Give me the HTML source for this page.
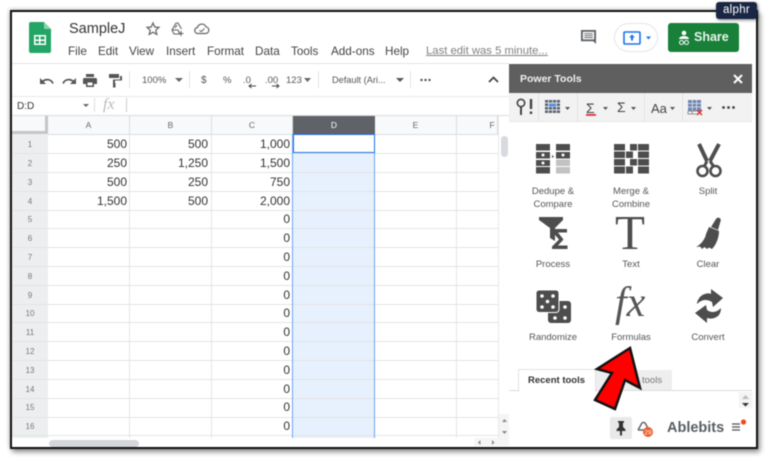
<!DOCTYPE html>
<html><head><meta charset="utf-8">
<style>
html,body{margin:0;padding:0;background:#fff;}
body{width:768px;height:459px;position:relative;overflow:hidden;font-family:"Liberation Sans",sans-serif;color:#3c4043;}
#w{position:absolute;left:0;top:0;width:768px;height:459px;filter:blur(.4px);overflow:hidden;}
.a{position:absolute;}
.t{position:absolute;white-space:nowrap;}
#frame{left:10px;top:10px;width:744px;height:435px;border:2px solid #111;box-shadow:2px 3px 5px rgba(0,0,0,.45),-1px -1px 4px rgba(0,0,0,.2);background:#fff;}
.m{top:45px;font-size:11.700px;color:#444;}
.hc{position:absolute;top:116px;height:18px;background:#f8f9fa;border-right:1px solid #dadce0;box-sizing:border-box;text-align:center;font-size:8.500px;line-height:18px;color:#666;}
.rn{position:absolute;left:12px;width:36px;margin-top:1px;background:#eceef0;font-size:8px;text-align:center;color:#777;box-sizing:border-box;line-height:18px;}
.hl{position:absolute;left:12px;width:486px;height:1px;background:#e3e3e3;}
.vl{position:absolute;top:134px;width:1px;height:304px;background:#e6e6e6;}
.c{position:absolute;font-size:12px;color:#333;text-align:right;width:76px;line-height:18px;}
.pl{position:absolute;margin-top:1px;font-size:9.500px;color:#555;text-align:center;width:80px;line-height:12.500px;}
.tb{position:absolute;margin-top:1px;font-size:9.500px;color:#555;}
</style></head>
<body>
<div id="w">
<div class="a" id="frame"></div>

<!-- sheets logo -->
<svg class="a" style="left:29px;top:22px" width="23" height="31" viewBox="0 0 23 31">
<path d="M2 0H15L22 7V29a2 2 0 0 1-2 2H2a2 2 0 0 1-2-2V2a2 2 0 0 1 2-2z" fill="#23a566"/>
<path d="M15 0L22 7H16a1 1 0 0 1-1-1z" fill="#8ed1b1"/>
<path d="M5 13h12v10H5z M6.500 14.500v3h3.500v-3z M11.500 14.500v3h4v-3z M6.500 19v2.500h3.500V19z M11.500 19v2.500h4V19z" fill="#fff" fill-rule="evenodd"/>
</svg>

<div class="t" style="left:69px;top:21px;font-size:14.500px;color:#333;">SampleJ</div>
<svg class="a" style="left:145px;top:21px" width="16" height="16" viewBox="0 0 16 16"><path d="M8 2l1.800 4 4.200.4-3.200 2.800 1 4.200L8 11.200 4.200 13.400l1-4.200L2 6.400 6.200 6z" fill="none" stroke="#5f6368" stroke-width="1.200"/></svg>
<svg class="a" style="left:169px;top:21px" width="17" height="16" viewBox="0 0 17 16"><path d="M7 2L3 9l2 4h6M7 2h2l3.500 6M3 9h6l2 4M6 7l2-3" fill="none" stroke="#5f6368" stroke-width="1.100"/><path d="M12 10v5M9.500 12.500h5" stroke="#5f6368" stroke-width="1.100"/></svg>
<svg class="a" style="left:194px;top:22px" width="16" height="14" viewBox="0 0 16 14"><path d="M4 11.500a3 3 0 0 1-.5-6A4.500 4.500 0 0 1 12 4.800a3.400 3.400 0 0 1 0 6.700z" fill="none" stroke="#5f6368" stroke-width="1.200"/><path d="M5.500 8.500l2 1 3-3" fill="none" stroke="#5f6368" stroke-width="1"/></svg>

<div class="t m" style="left:68px">File</div>
<div class="t m" style="left:98px">Edit</div>
<div class="t m" style="left:129px">View</div>
<div class="t m" style="left:166px">Insert</div>
<div class="t m" style="left:207px">Format</div>
<div class="t m" style="left:255px">Data</div>
<div class="t m" style="left:291px">Tools</div>
<div class="t m" style="left:331px">Add-ons</div>
<div class="t m" style="left:385px">Help</div>
<div class="t" style="left:426px;top:45px;font-size:11.300px;color:#808080;text-decoration:underline;">Last edit was 5 minute...</div>

<!-- comment -->
<svg class="a" style="left:580px;top:29px" width="17" height="16" viewBox="0 0 18 17"><path d="M1 1h16v15l-3-3H1z" fill="#5f6368"/><path d="M3 3h12v8H3z" fill="#fff"/><path d="M4.500 4.500h9v1h-9zM4.500 6.500h9v1h-9zM4.500 8.500h9v1h-9z" fill="#5f6368"/></svg>
<!-- present -->
<div class="a" style="left:614px;top:23px;width:44px;height:29px;border:1px solid #e3e6ea;border-radius:15px;box-sizing:border-box;"></div>
<svg class="a" style="left:623px;top:31px" width="32" height="14" viewBox="0 0 32 14"><rect x="1" y="1" width="16" height="12" rx="1" fill="#fff" stroke="#1a73e8" stroke-width="1.600"/><path d="M9 3.500l3 3h-2v3h-2v-3h-2z" fill="#1a73e8"/><path d="M23 5.500h5l-2.500 3z" fill="#1a73e8"/></svg>
<!-- share -->
<div class="a" style="left:668px;top:23px;width:71px;height:29px;background:#188038;border-radius:3px;"></div>
<svg class="a" style="left:677px;top:30px" width="14" height="16" viewBox="0 0 14 16"><circle cx="7" cy="3" r="2.300" fill="#fff"/><path d="M2 9c0-2 3-3 5-3s5 1 5 3z" fill="#fff"/><circle cx="4.500" cy="12.500" r="2" fill="none" stroke="#fff"/><circle cx="9.500" cy="12.500" r="2" fill="none" stroke="#fff"/></svg>
<div class="t" style="left:694px;top:30px;font-size:12.500px;font-weight:bold;color:#e9f5ec;">Share</div>

<!-- alphr -->
<div class="a" style="left:716px;top:2px;width:41px;height:17px;background:#1a2744;border-radius:3px;box-shadow:1px 1px 3px rgba(0,0,0,.5);color:#fff;font-size:11.500px;text-align:center;line-height:16px;letter-spacing:.3px;">alphr</div>

<!-- dividers -->
<div class="a" style="left:12px;top:63px;width:497px;height:1px;background:#e3e3e3;"></div>
<div class="a" style="left:12px;top:96px;width:497px;height:1px;background:#e8e8e8;"></div>
<div class="a" style="left:12px;top:115px;width:497px;height:1px;background:#dadce0;"></div>

<!-- toolbar -->
<svg class="a" style="left:39px;top:73px" width="90" height="15" viewBox="0 0 90 15">
<path d="M14 10.500C12 6 7 5.500 3.500 8.500" fill="none" stroke="#555" stroke-width="1.700"/><path d="M1 5v6h6z" fill="#555"/>
<path d="M24 10.500C26 6 31 5.500 34.500 8.500" fill="none" stroke="#555" stroke-width="1.700"/><path d="M37 5v6h-6z" fill="#555"/>
<path d="M47 1h8v3h-8zM45 5h12a1.500 1.500 0 0 1 1 1.500V11h-3v3h-8v-3h-3V6.500A1.500 1.500 0 0 1 45 5z" fill="#555"/><path d="M48.500 9.500h5v3h-5z" fill="#fff"/>
<path d="M70 1h10v4H70zM81 3h2v4.500h-7V10h-2V6.500h7zM74 10h2.500v4.500H74z" fill="#555"/>
</svg>
<div class="a" style="left:129px;top:71px;width:1px;height:17px;background:#e3e3e3"></div>
<div class="tb" style="left:142px;top:74px;">100%</div>
<svg class="a" style="left:175px;top:78px" width="8" height="5"><path d="M0 0h8L4 4z" fill="#666"/></svg>
<div class="a" style="left:189px;top:71px;width:1px;height:17px;background:#e3e3e3"></div>
<div class="tb" style="left:201px;top:74px;font-size:10px;">$</div>
<div class="tb" style="left:223px;top:74px;">%</div>
<div class="tb" style="left:243px;top:74px;">.0</div>
<svg class="a" style="left:247px;top:83px" width="10" height="6"><path d="M9 3H3M4.500 1L2 3l2.500 2" fill="none" stroke="#444"/></svg>
<div class="tb" style="left:265px;top:74px;">.00</div>
<svg class="a" style="left:271px;top:83px" width="10" height="6"><path d="M1 3h6M5.500 1L8 3 5.500 5" fill="none" stroke="#444"/></svg>
<div class="tb" style="left:286px;top:74px;">123</div>
<svg class="a" style="left:304px;top:78px" width="7" height="4"><path d="M0 0h7L3.500 4z" fill="#666"/></svg>
<div class="a" style="left:318px;top:71px;width:1px;height:17px;background:#e3e3e3"></div>
<div class="tb" style="left:332px;top:74px;font-size:9.200px;">Default (Ari...</div>
<svg class="a" style="left:396px;top:78px" width="8" height="5"><path d="M0 0h8L4 4z" fill="#555"/></svg>
<div class="a" style="left:410px;top:71px;width:1px;height:17px;background:#e3e3e3"></div>
<svg class="a" style="left:420px;top:78px" width="12" height="4"><circle cx="1.500" cy="2" r="1.200" fill="#555"/><circle cx="5.500" cy="2" r="1.200" fill="#555"/><circle cx="9.500" cy="2" r="1.200" fill="#555"/></svg>
<svg class="a" style="left:488px;top:76px" width="11" height="8"><path d="M1 6l4.500-4.500L10 6" fill="none" stroke="#444" stroke-width="1.800"/></svg>

<!-- formula bar -->
<div class="t" style="left:17px;top:101px;font-size:10px;color:#333;">D:D</div>
<svg class="a" style="left:83px;top:104px" width="6" height="4"><path d="M0 0h6L3 3z" fill="#666"/></svg>
<div class="a" style="left:94px;top:98px;width:1px;height:14px;background:#ddd"></div>
<div class="t" style="left:103px;top:96px;font-family:'Liberation Serif',serif;font-style:italic;font-size:16px;color:#bbb;">fx</div>
<div class="a" style="left:126px;top:98px;width:1px;height:14px;background:#ccc"></div>

<!-- grid headers -->
<div class="a" style="left:12px;top:116px;width:36px;height:18px;background:#f8f9fa;border-right:3px solid #c4c6c8;border-bottom:3px solid #c4c6c8;box-sizing:border-box;"></div>
<div class="hc" style="left:48px;width:82px;">A</div>
<div class="hc" style="left:130px;width:82px;">B</div>
<div class="hc" style="left:212px;width:81px;">C</div>
<div class="hc" style="left:293px;width:82px;background:#5f6368;color:#fff;border:0;">D</div>
<div class="hc" style="left:375px;width:82px;">E</div>
<div class="hc" style="left:457px;width:41px;text-align:right;padding-right:0;">F&nbsp;</div>
<div class="a" style="left:12px;top:134px;width:486px;height:1px;background:#dadce0;"></div>

<!-- column D highlight -->
<div class="a" style="left:293px;top:134px;width:82px;height:304px;background:#e7f0fd;"></div>

<!-- verticals -->
<div class="vl" style="left:129px"></div><div class="vl" style="left:211px"></div><div class="vl" style="left:456px"></div>

<!-- row headers -->
<div class="a" style="left:12px;top:134px;width:36px;height:304px;background:#eceef0;"></div>
<div class="rn" style="top:135px;">1</div><div class="rn" style="top:154px;">2</div><div class="rn" style="top:172.500px;">3</div><div class="rn" style="top:191.500px;">4</div>
<div class="rn" style="top:210px;">5</div><div class="rn" style="top:229px;">6</div><div class="rn" style="top:248px;">7</div><div class="rn" style="top:266.500px;">8</div>
<div class="rn" style="top:285.500px;">9</div><div class="rn" style="top:304px;">10</div><div class="rn" style="top:323px;">11</div><div class="rn" style="top:342px;">12</div>
<div class="rn" style="top:360.500px;">13</div><div class="rn" style="top:379.500px;">14</div><div class="rn" style="top:398px;">15</div><div class="rn" style="top:417px;">16</div>

<!-- horizontals -->
<div class="hl" style="top:153px"></div><div class="hl" style="top:172px"></div><div class="hl" style="top:191px"></div><div class="hl" style="top:210px"></div>
<div class="hl" style="top:228px"></div><div class="hl" style="top:247px"></div><div class="hl" style="top:266px"></div><div class="hl" style="top:285px"></div>
<div class="hl" style="top:304px"></div><div class="hl" style="top:322px"></div><div class="hl" style="top:341px"></div><div class="hl" style="top:360px"></div>
<div class="hl" style="top:379px"></div><div class="hl" style="top:398px"></div><div class="hl" style="top:417px"></div><div class="hl" style="top:435px"></div>

<!-- D selection -->
<div class="a" style="left:292px;top:134px;width:1px;height:304px;background:#6fa5f0;"></div>
<div class="a" style="left:374px;top:134px;width:1px;height:304px;background:#6fa5f0;"></div>
<div class="a" style="left:293px;top:134px;width:82px;height:19px;border:1px solid #1a73e8;box-sizing:border-box;background:#fff;"></div>

<!-- cells -->
<div class="c" style="left:51px;top:135px">500</div><div class="c" style="left:132px;top:135px">500</div><div class="c" style="left:214px;top:135px">1,000</div>
<div class="c" style="left:51px;top:154px">250</div><div class="c" style="left:132px;top:154px">1,250</div><div class="c" style="left:214px;top:154px">1,500</div>
<div class="c" style="left:51px;top:172.500px">500</div><div class="c" style="left:132px;top:172.500px">250</div><div class="c" style="left:214px;top:172.500px">750</div>
<div class="c" style="left:51px;top:191.500px">1,500</div><div class="c" style="left:132px;top:191.500px">500</div><div class="c" style="left:214px;top:191.500px">2,000</div>
<div class="c" style="left:214px;top:210px">0</div><div class="c" style="left:214px;top:229px">0</div><div class="c" style="left:214px;top:248px">0</div>
<div class="c" style="left:214px;top:266.500px">0</div><div class="c" style="left:214px;top:285.500px">0</div><div class="c" style="left:214px;top:304px">0</div>
<div class="c" style="left:214px;top:323px">0</div><div class="c" style="left:214px;top:342px">0</div><div class="c" style="left:214px;top:360.500px">0</div>
<div class="c" style="left:214px;top:379.500px">0</div><div class="c" style="left:214px;top:398px">0</div><div class="c" style="left:214px;top:417px">0</div>

<!-- scrollbars -->
<div class="a" style="left:498px;top:116px;width:11px;height:330px;background:#fff;border-left:1px solid #e8e8e8;box-sizing:border-box;"></div>
<div class="a" style="left:501px;top:136px;width:7px;height:21px;background:#d8dadf;border-radius:4px;"></div>
<div class="a" style="left:499px;top:414px;width:10px;height:32px;background:#f5f5f5;"></div>
<svg class="a" style="left:501px;top:418px" width="7" height="18"><path d="M1 4h5L3.500 1zM1 13h5l-2.500 3z" fill="#888"/></svg>
<div class="a" style="left:12px;top:438px;width:486px;height:8px;background:#fff;"></div>
<div class="a" style="left:49px;top:440px;width:90px;height:7px;background:#d5d7db;border-radius:4px;"></div>
<div class="a" style="left:474px;top:438px;width:35px;height:8px;background:#f5f5f5;"></div>
<svg class="a" style="left:477px;top:439px" width="20" height="7"><path d="M3.500 1v5L1 3.500zM15 1v5l2.500-2.500z" fill="#888"/></svg>

<!-- side panel -->
<div class="a" style="left:509px;top:64px;width:243px;height:382px;background:#fff;"></div>
<div class="a" style="left:509px;top:64px;width:243px;height:29px;background:#5f5f5f;"></div>
<div class="t" style="left:520px;top:73px;font-size:10.500px;font-weight:bold;color:#f0f0f0;">Power Tools</div>
<svg class="a" style="left:733px;top:74px" width="10" height="10"><path d="M1 1l8 8M9 1l-8 8" stroke="#fff" stroke-width="2"/></svg>
<div class="a" style="left:509px;top:93px;width:243px;height:29px;background:#f2f2f2;border-bottom:1px solid #e5e5e5;box-sizing:border-box;"></div>
<div class="a" style="left:538px;top:93px;width:1px;height:28px;background:#e2e2e2"></div>
<div class="a" style="left:577px;top:93px;width:1px;height:28px;background:#e2e2e2"></div>
<div class="a" style="left:644px;top:93px;width:1px;height:28px;background:#e2e2e2"></div>
<div class="a" style="left:682px;top:93px;width:1px;height:28px;background:#e2e2e2"></div>

<svg class="a" style="left:516px;top:98px" width="232" height="20" viewBox="0 0 232 20">
<!-- key/! -->
<circle cx="5" cy="5" r="3.700" fill="none" stroke="#444" stroke-width="1.600"/><path d="M5 9v8" stroke="#444" stroke-width="2"/><path d="M15 1v10" stroke="#444" stroke-width="2.400"/><path d="M15 13.500v2.500" stroke="#444" stroke-width="2.400"/>
<!-- table -->
<rect x="29" y="2" width="15" height="13" fill="#5f6368"/><path d="M32.500 2v13M36.500 2v13M40.500 2v13M29 5h15M29 8.500h15M29 12h15" stroke="#d8e4f5" stroke-width=".9"/><rect x="33" y="5.500" width="7" height="3" fill="#5b8fe0"/>
<path d="M49 9h5l-2.500 3z" fill="#555"/>
<!-- sigma red -->
<text x="70" y="15" font-family="Liberation Sans,sans-serif" font-size="14" fill="#444">Σ</text><rect x="70" y="16" width="10" height="1.800" fill="#d33"/>
<path d="M87 9h5l-2.500 3zM115 9h5l-2.500 3z" fill="#555"/>
<text x="101" y="14" font-family="Liberation Sans,sans-serif" font-size="14" fill="#444">Σ</text>
<text x="135" y="15" font-family="Liberation Sans,sans-serif" font-size="13" fill="#444">Aa</text>
<path d="M154 9h5l-2.500 3z" fill="#555"/>
<rect x="172" y="2" width="13" height="11" fill="#6d86b5"/><path d="M176.300 2v11M180.600 2v11M172 5.500h13M172 9h13" stroke="#e8e8e8" stroke-width=".8"/><path d="M172 13v3h9M176 13v3M172 13h13" stroke="#777" stroke-width=".8" fill="none"/>
<path d="M181 12l5 5M186 12l-5 5" stroke="#d33" stroke-width="1.500"/>
<path d="M191 9h5l-2.500 3z" fill="#555"/>
<circle cx="207.500" cy="9.500" r="1.400" fill="#444"/><circle cx="212.500" cy="9.500" r="1.400" fill="#444"/><circle cx="217.500" cy="9.500" r="1.400" fill="#444"/>
</svg>

<!-- Dedupe icon -->
<svg class="a" style="left:536px;top:144px" width="36" height="30" viewBox="0 0 36 30">
<g fill="#4d4d4d"><rect x="0" y="0" width="14" height="6.500"/><rect x="0" y="8" width="14" height="6.500"/><rect x="0" y="16" width="14" height="6"/><rect x="0" y="23" width="14" height="6.500"/><rect x="20" y="0" width="14" height="6.500"/><rect x="20" y="8" width="14" height="6.500"/></g>
<rect x="20" y="15.500" width="14" height="6.500" fill="#c2c2c2"/><rect x="20" y="23" width="14" height="6.500" fill="#c2c2c2"/>
<circle cx="7" cy="11" r="1.500" fill="#fff"/><circle cx="7" cy="19" r="1.500" fill="#fff"/><circle cx="27" cy="11" r="1.500" fill="#fff"/>
<path d="M16 11l2 1.500-2 1.500z" fill="#4d4d4d"/>
</svg>
<!-- Merge icon -->
<svg class="a" style="left:614px;top:144px" width="36" height="30" viewBox="0 0 36 30">
<g fill="#4d4d4d"><rect x="0" y="0" width="11" height="6.500"/><rect x="16" y="0" width="7" height="6.500"/><rect x="24" y="0" width="11" height="6.500"/>
<rect x="0" y="7.500" width="11" height="6.500"/><rect x="12" y="7.500" width="7" height="6.500"/><rect x="24" y="7.500" width="11" height="6.500"/>
<rect x="0" y="15" width="11" height="6.500"/><rect x="16" y="15" width="7" height="6.500"/><rect x="24" y="15" width="11" height="6.500"/>
<rect x="0" y="22.500" width="11" height="7"/><rect x="12" y="22.500" width="7" height="7"/><rect x="24" y="22.500" width="11" height="7"/></g>
</svg>
<!-- Scissors -->
<svg class="a" style="left:695px;top:143px" width="28" height="35" viewBox="0 0 28 35">
<path d="M4 1l8 17M24 1l-9 17" fill="none" stroke="#4d4d4d" stroke-width="4"/>
<path d="M12 18l-3 6M15 18l4 6" stroke="#4d4d4d" stroke-width="3"/>
<circle cx="7.500" cy="28" r="5" fill="none" stroke="#4d4d4d" stroke-width="2.600"/><circle cx="20.500" cy="28" r="5" fill="none" stroke="#4d4d4d" stroke-width="2.600"/>
</svg>

<div class="pl" style="left:513px;top:185px;">Dedupe &amp;<br>Compare</div>
<div class="pl" style="left:591px;top:185px;">Merge &amp;<br>Combine</div>
<div class="pl" style="left:668px;top:185px;">Split</div>

<!-- Process -->
<svg class="a" style="left:538px;top:216px" width="32" height="35" viewBox="0 0 32 35">
<path d="M1 1h24v3l-8 8v13l-5-3V12L1 4z" fill="#4d4d4d"/>
<path d="M14 13h15v3.500H20l5.500 7-5.500 6h9.500V33H14v-2.500l7-7-7-8z" fill="#4d4d4d"/>
</svg>
<!-- T -->
<div class="t" style="left:615px;top:207px;font-family:'Liberation Serif',serif;font-size:49px;line-height:52px;color:#4d4d4d;">T</div>
<!-- Broom -->
<svg class="a" style="left:695px;top:216px" width="28" height="35" viewBox="0 0 28 35">
<path d="M16 11l5-8a2.500 2.500 0 0 1 4.500 2.200L23 14z" fill="#4d4d4d"/>
<path d="M14 11l10 4c0 7-3 14-7 18l-3-1.500-2 1.500-2.500-2-2.500 2-2-2.500-4 .5c4-2 9-7 10-13z" fill="#4d4d4d"/>
</svg>
<div class="pl" style="left:513px;top:258px;">Process</div>
<div class="pl" style="left:591px;top:258px;">Text</div>
<div class="pl" style="left:668px;top:258px;">Clear</div>

<!-- Dice -->
<svg class="a" style="left:536px;top:290px" width="36" height="34" viewBox="0 0 36 34">
<rect x="12" y="11" width="23" height="22" rx="3" fill="#4d4d4d"/>
<rect x="0" y="0" width="23" height="22.500" rx="3" fill="#4d4d4d" stroke="#fff" stroke-width="1"/>
<g fill="#fff"><circle cx="6" cy="6" r="1.800"/><circle cx="17" cy="6" r="1.800"/><circle cx="11.500" cy="11.500" r="1.800"/><circle cx="6" cy="17" r="1.800"/><circle cx="17" cy="17" r="1.800"/>
<circle cx="29" cy="17" r="1.800"/><circle cx="29" cy="28" r="1.800"/><circle cx="19" cy="28" r="1.800"/></g>
</svg>
<!-- fx -->
<div class="t" style="left:615px;top:281px;font-family:'Liberation Serif',serif;font-style:italic;font-size:42px;line-height:44px;color:#555;">fx</div>
<!-- Convert -->
<svg class="a" style="left:693px;top:289px" width="32" height="35" viewBox="0 0 32 35">
<path d="M8 7C12 4 16 4 18 5V0l12 9-10 9-1-5C14 10 9 10 4 15c0-3 2-6 4-8z" fill="#4d4d4d"/>
<path d="M25 27c-4 3-8 3-11 2v5L2 24l11-8 1 5c4 3 9 3 14-2 0 3-1 6-3 8z" fill="#4d4d4d"/>
</svg>
<div class="pl" style="left:513px;top:331px;">Randomize</div>
<div class="pl" style="left:591px;top:331px;">Formulas</div>
<div class="pl" style="left:668px;top:331px;">Convert</div>

<!-- tabs -->
<div class="a" style="left:595px;top:370px;width:77px;height:21px;background:#eee;"></div>
<div class="t" style="left:642px;top:375px;font-size:9.500px;color:#777;">tools</div>
<div class="a" style="left:509px;top:390px;width:243px;height:1px;background:#ddd;"></div>
<div class="a" style="left:518px;top:369px;width:78px;height:23px;background:#fff;border:1px solid #e2e2e2;border-bottom:0;box-sizing:border-box;"></div>
<div class="t" style="left:528px;top:375px;font-size:9.500px;font-weight:bold;color:#333;">Recent tools</div>

<!-- panel scroll -->
<div class="a" style="left:739px;top:392px;width:13px;height:16px;background:#f4f4f4;"></div>
<svg class="a" style="left:741px;top:394px" width="9" height="13"><path d="M1 5h7L4.500 1z" fill="#bbb"/><path d="M1 9h7l-3.500 3.500z" fill="#333"/></svg>

<!-- footer -->
<div class="a" style="left:610px;top:417px;width:22px;height:22px;background:#e9e9e9;border-radius:2px;"></div>
<svg class="a" style="left:615px;top:420px" width="12" height="16" viewBox="0 0 12 16"><path d="M3 1h6v1.500L8 3v4l2.500 2.500V11H7v4.500H5V11H1.500V9.500L4 7V3l-1-.5z" fill="#333"/></svg>
<svg class="a" style="left:636px;top:419px" width="18" height="19" viewBox="0 0 18 19"><path d="M2 11L6 4a2 2 0 0 1 3 0l3 5M2 11h6" fill="none" stroke="#666" stroke-width="1.500"/><circle cx="12" cy="13" r="5" fill="#ee5a2a"/><text x="12" y="15.500" text-anchor="middle" font-family="Liberation Sans,sans-serif" font-size="6.500" fill="#fff">29</text></svg>
<div class="t" style="left:667px;top:420px;font-size:14.500px;font-weight:bold;color:#5a5e63;">Ablebits</div>
<svg class="a" style="left:731px;top:419px" width="16" height="14" viewBox="0 0 16 14"><path d="M1 5h8M1 8h8M1 11h8" stroke="#555" stroke-width="1.300"/><circle cx="12.500" cy="3" r="2.600" fill="#ee4a22"/></svg>

<!-- big red arrow -->
<svg class="a" style="left:590px;top:345px" width="60" height="70" viewBox="0 0 60 70">
<path d="M40 3L7 24 22 28 5 55 25 64 35 35 50 43z" fill="#f00" stroke="#111" stroke-width="2.500" stroke-linejoin="miter"/>
</svg>
</div>
</body></html>
